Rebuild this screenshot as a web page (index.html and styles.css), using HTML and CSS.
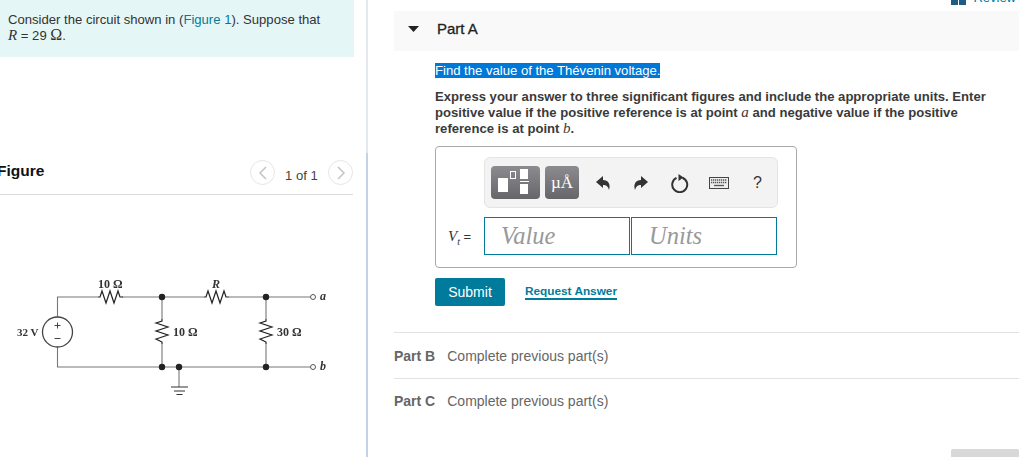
FILE: index.html
```html
<!DOCTYPE html>
<html lang="en">
<head>
  <meta charset="UTF-8" />
  <meta name="viewport" content="width=device-width, initial-scale=1.0"/>
  <title>Part A - Thevenin voltage</title>
  <link rel="stylesheet" href="styles.css">
</head>
<body>

  <div class="page">

    <div class="left">
      <div class="intro">
        Consider the circuit shown in (<a href="#">Figure 1</a>). Suppose that<br>
        <i class="math">R</i> = 29 <span class="math-up">&Omega;</span>.
      </div>

      <div class="figure-head">
        <h2>Figure</h2>
        <div class="pager">
          <span class="pager-btn">
            <svg width="10" height="14" viewBox="0 0 10 14"><path d="M8 1 L2 7 L8 13" fill="none" stroke="#c4c4c4" stroke-width="1.5"/></svg>
          </span>
          <span class="pager-text">1 of 1</span>
          <span class="pager-btn">
            <svg width="10" height="14" viewBox="0 0 10 14"><path d="M2 1 L8 7 L2 13" fill="none" stroke="#c4c4c4" stroke-width="1.5"/></svg>
          </span>
        </div>
      </div>

      <svg class="circuit" width="350" height="150" viewBox="0 265 350 150">
        <g fill="none" stroke="#777" stroke-width="1.1">
          <path d="M57.5 318 V298 H98 M122 298 H204 M229 298 H310.5"/>
          <path d="M57.5 348 V368 H310.5"/>
          <path d="M162 298 V320 M162 345 V368 M266 298 V320 M266 345 V368"/>
          <path d="M179 368 V388"/>
        </g>
        <g fill="none" stroke="#222" stroke-width="1.2">
          <path d="M98 298 L100 298 L102 292 L106 304 L110 292 L114 304 L118 292 L120 298 L123 298"/>
          <path d="M204 298 L206 298 L208 292 L212 304 L216 292 L220 304 L224 292 L226 298 L229 298"/>
          <path d="M162 320 L162 322 L156 324 L168 328 L156 332 L168 336 L156 340 L162 343 L162 345"/>
          <path d="M266 320 L266 322 L260 324 L272 328 L260 332 L272 336 L260 340 L266 343 L266 345"/>
        </g>
        <circle cx="57.5" cy="333" r="15" fill="#fff" stroke="#444" stroke-width="1.3"/>
        <path d="M54.5 326.5 H60.5 M57.5 323.5 V329.5 M54.5 339.5 H60.5" stroke="#444" fill="none"/>
        <g fill="#222">
          <circle cx="162" cy="298" r="3.2"/>
          <circle cx="266" cy="298" r="3.2"/>
          <circle cx="162" cy="368" r="3.2"/>
          <circle cx="179" cy="368" r="3.2"/>
          <circle cx="266" cy="368" r="3.2"/>
        </g>
        <circle cx="313" cy="298" r="2.5" fill="#fff" stroke="#555"/>
        <circle cx="313" cy="368" r="2.5" fill="#fff" stroke="#555"/>
        <path d="M171 388 H188 M174 392 H185 M176.500 395.500 H182.500" stroke="#333" stroke-width="1.2" fill="none"/>
        <g class="circuit-text">
          <text x="98" y="289">10 &Omega;</text>
          <text x="173" y="337">10 &Omega;</text>
          <text x="277" y="337">30 &Omega;</text>
          <text class="circuit-source" x="17" y="337">32 V</text>
          <text class="circuit-var" x="212" y="289">R</text>
          <text class="circuit-var" x="320" y="301">a</text>
          <text class="circuit-var" x="320" y="371">b</text>
        </g>
      </svg>
    </div>

    <div class="right">
      <div class="review-row">
        <svg width="15" height="6" viewBox="0 0 15 6"><path d="M0 0 H7 V5 H0 Z M8 0 H15 V5 H8 Z" fill="#1d5c85"/></svg>
        <a href="#">Review</a>
      </div>

      <div class="part-head">
        <svg width="11" height="6" viewBox="0 0 11 6"><path d="M0 0 H11 L5.500 6 Z" fill="#222"/></svg>
        <h3>Part A</h3>
      </div>

      <div class="part-body">
        <p class="prompt"><span class="selected">Find the value of the Th&eacute;venin voltage.</span></p>
        <p class="instructions">
          Express your answer to three significant figures and include the appropriate units. Enter
          positive value if the positive reference is at point <i class="math">a</i> and negative value if the positive
          reference is at point <i class="math">b</i>.
        </p>

        <div class="answer-box">
          <div class="toolbar">
            <span class="tool-btn tool-template">
              <svg width="36" height="28" viewBox="0 0 36 28">
                <path d="M0 9 H10 V23 H0 Z M22 0 H30 V10 H22 Z M22 15 H30 V25 H22 Z M22 12 H31 V13 H22 Z" fill="#fff"/>
                <rect x="12.500" y="2.500" width="5" height="7" fill="none" stroke="#fff"/>
              </svg>
            </span>
            <span class="tool-btn tool-units">&micro;&Aring;</span>
            <div class="tool-icons">
              <svg width="16" height="16" viewBox="0 0 16 16"><path d="M1 7 L8 1 V5 C13 5 16 9 14 15 C13 11 11 10 8 10 V13 Z" fill="#333"/></svg>
              <svg width="16" height="16" viewBox="0 0 16 16"><path d="M15 7 L8 1 V5 C3 5 0 9 2 15 C3 11 5 10 8 10 V13 Z" fill="#333"/></svg>
              <svg width="18" height="20" viewBox="0 0 18 20">
                <path d="M11.500 4.700 A7.500 7.500 0 1 1 5.500 4.900" fill="none" stroke="#333" stroke-width="2"/>
                <path d="M7.500 1 L12.500 4.500 L7.500 8 Z" fill="#333"/>
              </svg>
              <svg width="20" height="12" viewBox="0 0 20 12">
                <rect x="0.500" y="0.500" width="19" height="11" fill="#eee" stroke="#444"/>
                <path d="M2 3 H18 M2 5.500 H18" stroke="#555" stroke-width="1.300" stroke-dasharray="1.300 .7" fill="none"/>
                <path d="M5 8.500 H15" stroke="#555" stroke-width="1.300" fill="none"/>
              </svg>
              <span class="tool-help">?</span>
            </div>
          </div>

          <div class="answer-row">
            <label class="answer-label"><i class="math">V<sub>t</sub></i> =</label>
            <input class="answer-input input-value" type="text" placeholder="Value"/>
            <input class="answer-input input-units" type="text" placeholder="Units"/>
          </div>
        </div>

        <div class="actions">
          <button class="submit">Submit</button>
          <a class="request" href="#">Request Answer</a>
        </div>
      </div>

      <div class="part-row part-b"><b>Part B</b><span>Complete previous part(s)</span></div>
      <div class="part-row part-c"><b>Part C</b><span>Complete previous part(s)</span></div>

      <div class="bottom-row"><span class="next-btn"></span></div>
    </div>

  </div>

</body>
</html>
```

FILE: styles.css
```css
html, body {
  margin: 0;
  height: 457px;
  overflow: hidden;
  background: #fff;
}

body {
  font-family: "Liberation Sans", Arial, sans-serif;
  font-size: 13.1px;
  color: #333;
}

a {
  color: #007b9c;
  text-decoration: none;
}

.math {
  font-family: "Liberation Serif", serif;
  font-style: italic;
  font-size: 15px;
  line-height: 0;
}

.math-up {
  font-family: "Liberation Serif", serif;
  font-size: 16px;
  line-height: 0;
}

.page {
  display: flex;
  width: 1024px;
  height: 457px;
}

/* left column */
.left {
  width: 368px;
  flex: none;
  box-sizing: border-box;
  border-right: 2px solid #dfe7ee;
  border-image: linear-gradient(#e3e8ee 153px, #c3d3e4 153px) 1;
  height: 457px;
}

.intro {
  width: 354px;
  height: 57px;
  box-sizing: border-box;
  padding: 12px 8px 0;
  background: #e5f6f7;
  line-height: 16px;
}

.figure-head {
  width: 353px;
  height: 44px;
  box-sizing: border-box;
  margin-top: 94px;
  display: flex;
  justify-content: space-between;
  align-items: flex-start;
  border-bottom: 1px solid #dcdcdc;
}

.figure-head h2 {
  margin: 11px 0 0 -3px;
  font-size: 15.5px;
  line-height: 18px;
  color: #111;
}

.pager {
  display: flex;
  align-items: flex-start;
}

.pager-btn {
  width: 25px;
  height: 25px;
  box-sizing: border-box;
  margin-top: 9px;
  border: 1px solid #e6e6e6;
  border-radius: 50%;
  display: flex;
  align-items: center;
  justify-content: center;
}

.pager-text {
  width: 53px;
  margin-top: 17px;
  text-align: center;
  line-height: 16px;
  color: #444;
}

.circuit {
  display: block;
  margin-top: 69px;
  filter: blur(0.4px);
}

.circuit-text text {
  font-family: "Liberation Serif", serif;
  font-size: 12px;
  font-weight: bold;
  fill: #333;
}

.circuit-text .circuit-source {
  font-size: 11px;
}

.circuit-text .circuit-var {
  font-style: italic;
}

/* right column */
.right {
  width: 625px;
  margin-left: 26px;
  flex: none;
}

.review-row {
  height: 6px;
  overflow: hidden;
  display: flex;
  justify-content: flex-end;
  align-items: flex-end;
  gap: 7px;
  padding-right: 3px;
}

.review-row a {
  font-size: 13px;
  line-height: 16px;
}

.part-head {
  margin-top: 5px;
  height: 40px;
  background: #f9f9f9;
  display: flex;
  align-items: center;
}

.part-head svg {
  margin: 0 0 5px 14px;
}

.part-head h3 {
  margin: 0 0 6px 18px;
  font-size: 15px;
  font-weight: normal;
  -webkit-text-stroke: 0.3px #222;
  color: #222;
}

.part-body {
  padding-left: 41px;
}

.prompt {
  margin: 12px 0 0;
  line-height: 15px;
  color: #fff;
}

.selected {
  background: #0078d7;
}

.instructions {
  margin: 11px 0 0;
  width: 560px;
  line-height: 16px;
  font-weight: bold;
  color: #3a3a3a;
}

.instructions .math {
  font-weight: normal;
}

.answer-box {
  width: 362px;
  height: 122px;
  box-sizing: border-box;
  margin-top: 9px;
  border: 1px solid #aaa;
  border-radius: 4px;
  padding: 10px 18px 0 48px;
}

.toolbar {
  height: 51px;
  box-sizing: border-box;
  background: #f3f3f3;
  border: 1px solid #e4e4e4;
  border-radius: 6px;
  display: flex;
  align-items: center;
  padding-left: 6px;
  gap: 5px;
}

.tool-btn {
  height: 33px;
  box-sizing: border-box;
  border-radius: 4px;
  background: linear-gradient(#8b8b90, #66666a);
  display: flex;
  align-items: center;
  justify-content: center;
  color: #fff;
}

.tool-template {
  width: 49px;
}

.tool-units {
  width: 34px;
  font-family: "Liberation Serif", serif;
  font-size: 17px;
}

.tool-icons {
  display: flex;
  align-items: center;
  margin-left: 11px;
}

.tool-icons svg:nth-child(1) {
  margin-right: 22px;
}

.tool-icons svg:nth-child(2) {
  margin-right: 22px;
}

.tool-icons svg:nth-child(3) {
  margin-right: 20px;
}

.tool-help {
  margin-left: 24px;
  font-size: 16px;
  color: #333;
}

.answer-row {
  display: flex;
  align-items: center;
  margin-top: 9px;
  margin-left: -48px;
}

.answer-label {
  width: 49px;
  box-sizing: border-box;
  padding-left: 12px;
  font-size: 13px;
}

.answer-label .math {
  font-size: 15px;
}

.answer-label sub {
  font-size: 10px;
  line-height: 0;
}

.answer-input {
  width: 146px;
  height: 38px;
  box-sizing: border-box;
  margin: 0 1px 0 0;
  border: 1px solid #007b9c;
  border-radius: 0;
  padding: 0 17px;
  outline: none;
  font-family: "Liberation Serif", serif;
  font-style: italic;
  font-size: 24.500px;
}

.input-value {
  padding-left: 16px;
}

.answer-input::placeholder {
  color: #999;
  opacity: 1;
}

.actions {
  margin-top: 10px;
  display: flex;
  align-items: center;
  gap: 20px;
}

.submit {
  width: 70px;
  height: 28px;
  border: none;
  border-radius: 2px;
  background: #007b9c;
  color: #fff;
  font-family: inherit;
  font-size: 14px;
  cursor: pointer;
}

.request {
  font-size: 11.800px;
  font-weight: bold;
  line-height: 13px;
  border-bottom: 2px solid #007b9c;
}

.part-row {
  height: 45px;
  box-sizing: border-box;
  border-top: 1px solid #e2e2e2;
  display: flex;
  align-items: center;
  gap: 12px;
  color: #666;
  font-size: 14px;
}

.part-b {
  margin-top: 26px;
  height: 46px;
}

.bottom-row {
  margin-top: 26px;
  display: flex;
  justify-content: flex-end;
}

.next-btn {
  width: 68px;
  height: 8px;
  background: #d8d8d8;
  border-radius: 2px 2px 0 0;
}
```
